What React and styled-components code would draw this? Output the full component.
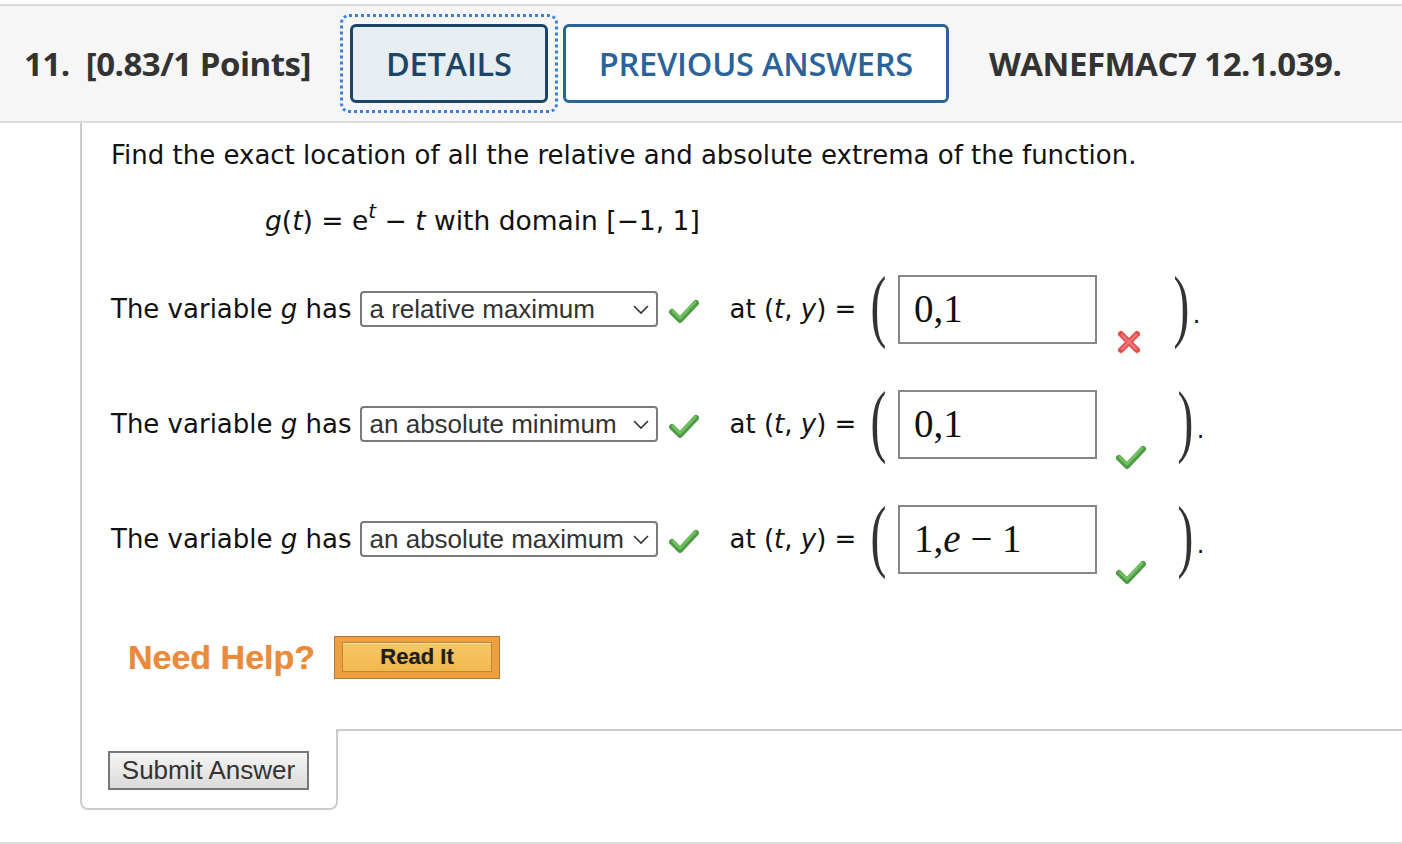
import React from "react";
import styled, { createGlobalStyle } from "styled-components";

const Global = createGlobalStyle`
  html, body { margin: 0; padding: 0; background: #fff; }
  body { font-family: "DejaVu Sans", Verdana, sans-serif; color: #111; }
`;

const Page = styled.div`
  width: 1402px;
  padding-top: 4px;
`;

const Header = styled.header`
  display: flex;
  align-items: center;
  height: 115px;
  background: #f6f6f6;
  border-top: 2px solid #dcdcdc;
  border-bottom: 2px solid #dcdcdc;
  padding-left: 24px;
  font-family: "Open Sans", sans-serif;
`;

const Title = styled.div`
  font-size: 33px;
  font-weight: 700;
  color: #333;
  letter-spacing: -0.5px;
  white-space: nowrap;
  margin: ${(p) => p.$m || 0};
`;

const FocusRing = styled.div`
  padding: 7px;
  border: 3px dotted #3b7fd6;
  border-radius: 9px;
  margin-right: 5px;
`;

const TabButton = styled.button`
  height: 79px;
  padding: 0 ${(p) => p.$px}px;
  border: 3px solid ${(p) => (p.$active ? "#1b4567" : "#2a6399")};
  border-radius: 6px;
  background: ${(p) => (p.$active ? "#e6eef2" : "#fff")};
  color: ${(p) => (p.$active ? "#1b4567" : "#2a6399")};
  font-family: "Open Sans", sans-serif;
  font-weight: 600;
  font-size: 32.5px;
  letter-spacing: -0.2px;
  white-space: nowrap;
`;

const Main = styled.div`
  margin-left: 80px;
`;

const Body = styled.section`
  border-left: 2px solid #cccccc;
  padding: 15px 0 0 29px;
  font-size: 26px;
`;

const Prompt = styled.p`
  margin: 0;
  line-height: 34px;
`;

const Formula = styled.p`
  margin: 31px 0 0 154px;
  line-height: 36px;
  font-size: 26.5px;
`;

const I = styled.i`
  font-style: italic;
`;

const Sup = styled.sup`
  font-size: 20px;
  font-style: italic;
  vertical-align: 0;
  position: relative;
  top: -12px;
`;

const Rows = styled.div`
  display: flex;
  flex-direction: column;
  gap: 35px;
  margin-top: 28px;
`;

const Row = styled.div`
  display: flex;
  align-items: center;
  height: 80px;
`;

const Label = styled.span`
  white-space: nowrap;
`;

const Select = styled.div`
  display: flex;
  align-items: center;
  justify-content: space-between;
  box-sizing: border-box;
  width: 298px;
  height: 36px;
  margin-left: 8px;
  padding: 0 6px 0 8px;
  border: 2px solid #7a7a7a;
  border-radius: 4px;
  font-family: "Liberation Sans", Arial, sans-serif;
  font-size: 26px;
  color: #333;
  white-space: nowrap;
`;

const MarkBox = styled.span`
  display: inline-flex;
  align-self: ${(p) => (p.$low ? "flex-end" : "center")};
  margin: ${(p) => p.$m};
`;

const AtText = styled.span`
  margin-left: 31px;
  white-space: nowrap;
`;

const Paren = styled.span`
  display: inline-block;
  font-family: "Liberation Serif", "Times New Roman", serif;
  font-size: 56px;
  line-height: 80px;
  color: #333;
  transform: translateY(-5px) scale(0.85, 1.45);
  margin: ${(p) => p.$m};
`;

const Answer = styled.div`
  box-sizing: border-box;
  width: 199px;
  height: 69px;
  margin-left: 10px;
  border: 2px solid #878787;
  padding: 6px 0 0 14px;
  font-family: "Liberation Serif", "Times New Roman", serif;
  font-size: 39px;
  line-height: 52px;
  color: #111;
  white-space: nowrap;
`;

const Dot = styled.span`
  align-self: center;
  margin-left: 2px;
  margin-top: 12px;
  font-size: 24px;
`;

const Help = styled.div`
  display: flex;
  align-items: center;
  margin: 57px 0 0 17px;
  padding-bottom: 50px;
`;

const HelpText = styled.span`
  font-family: "Liberation Sans", Arial, sans-serif;
  font-weight: 700;
  font-size: 34px;
  color: #e98a3c;
  text-shadow: 0 0 1px rgba(233, 138, 60, 0.6);
  margin-right: 19px;
`;

const ReadIt = styled.button`
  box-sizing: border-box;
  width: 166px;
  height: 43px;
  padding: 5px 7px 6px;
  border: 1px solid #b57637;
  background: #eda040;
  display: flex;
`;

const ReadItInner = styled.span`
  flex: 1;
  display: flex;
  align-items: center;
  justify-content: center;
  border: 1px solid #c0863f;
  background: linear-gradient(#f6c866, #f2b84f);
  box-shadow: inset 0 1px 0 #fbe2a8;
  font-family: "Liberation Sans", Arial, sans-serif;
  font-weight: 700;
  font-size: 22px;
  color: #1e1e1e;
  text-shadow: 0 0 1px rgba(0, 0, 0, 0.4);
`;

const Footer = styled.div`
  display: flex;
  align-items: flex-start;
`;

const SubmitTab = styled.div`
  box-sizing: border-box;
  width: 258px;
  height: 81px;
  padding: 22px 0 0 26px;
  border: 2px solid #cccccc;
  border-top: none;
  border-radius: 0 0 8px 8px;
`;

const FooterRest = styled.div`
  flex: 1;
  height: 30px;
  margin-left: -2px;
  border-top: 2px solid #cccccc;
  border-left: 2px solid #cccccc;
  border-top-left-radius: 4px;
`;

const Submit = styled.button`
  box-sizing: border-box;
  width: 201px;
  height: 39px;
  border: 2px solid #777;
  background: linear-gradient(#f5f5f5, #dadada);
  font-family: "Liberation Sans", Arial, sans-serif;
  font-size: 26px;
  color: #333;
  padding: 0;
`;

const BottomRule = styled.div`
  margin-top: 32px;
  border-top: 2px solid #dcdcdc;
`;

const Check = () => (
  <svg width="30" height="26" viewBox="0 0 30 26">
    <path d="M3 14 L11 22 L27 5" fill="none" stroke="#4f9a45" strokeWidth="6" strokeLinejoin="round" strokeLinecap="round" />
    <path d="M4 13 L11 20 L26 4" fill="none" stroke="#72bf62" strokeWidth="3" strokeLinejoin="round" strokeLinecap="round" />
  </svg>
);

const Cross = () => (
  <svg width="26" height="26" viewBox="0 0 26 26">
    <path d="M5 5 L21 21 M21 5 L5 21" stroke="#df4f4f" strokeWidth="6" strokeLinecap="round" />
    <path d="M6 6 L20 20 M20 6 L6 20" stroke="#ef7373" strokeWidth="2.5" strokeLinecap="round" />
  </svg>
);

const Chevron = () => (
  <svg width="18" height="12" viewBox="0 0 18 12">
    <path d="M2 3 L9 10 L16 3" fill="none" stroke="#333" strokeWidth="1.6" />
  </svg>
);

const rows = [
  { choice: "a relative maximum", answer: <>0,1</>, ok: false },
  { choice: "an absolute minimum", answer: <>0,1</>, ok: true },
  { choice: "an absolute maximum", answer: <>1,<I>e</I> − 1</>, ok: true },
];

export default function App() {
  return (
    <Page>
      <Global />
      <Header>
        <Title $m="0 29px 0 0">11.&nbsp; [0.83/1 Points]</Title>
        <FocusRing>
          <TabButton $active $px={33}>DETAILS</TabButton>
        </FocusRing>
        <TabButton $px={33}>PREVIOUS ANSWERS</TabButton>
        <Title $m="0 0 0 40px">WANEFMAC7 12.1.039.</Title>
      </Header>
      <Main>
        <Body>
          <Prompt>Find the exact location of all the relative and absolute extrema of the function.</Prompt>
          <Formula>
            <I>g</I>(<I>t</I>) = e<Sup>t</Sup> − <I>t</I> with domain [−1, 1]
          </Formula>
          <Rows>
            {rows.map((r, i) => (
              <Row key={i}>
                <Label>The variable <I>g</I> has</Label>
                <Select>
                  <span>{r.choice}</span>
                  <Chevron />
                </Select>
                <MarkBox $m="4px 0 0 11px"><Check /></MarkBox>
                <AtText>at (<I>t</I>, <I>y</I>) =</AtText>
                <Paren $m="0 0 0 13px">(</Paren>
                <Answer>{r.answer}</Answer>
                <MarkBox $low $m="0 0 -6px 19px">{r.ok ? <Check /> : <Cross />}</MarkBox>
                <Paren $m="0 0 0 30px">)</Paren>
                <Dot>.</Dot>
              </Row>
            ))}
          </Rows>
          <Help>
            <HelpText>Need Help?</HelpText>
            <ReadIt><ReadItInner>Read It</ReadItInner></ReadIt>
          </Help>
        </Body>
        <Footer>
          <SubmitTab>
            <Submit>Submit Answer</Submit>
          </SubmitTab>
          <FooterRest />
        </Footer>
      </Main>
      <BottomRule />
    </Page>
  );
}
